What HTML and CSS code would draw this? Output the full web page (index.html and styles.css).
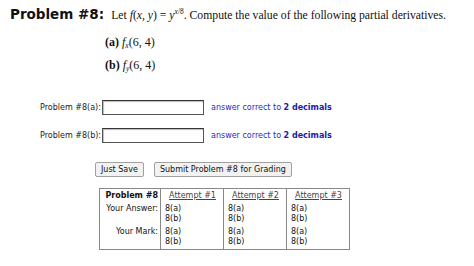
FILE: index.html
```html
<!DOCTYPE html>
<html lang="en">
<head>
    <meta charset="UTF-8">
    <title>Problem 8</title>
    <link rel="stylesheet" href="styles.css">
</head>
<body>

    <!-- Problem text -->
    <div class="problem">
        <span class="problem-title">Problem #8:</span>
        <span class="statement">Let <i>f</i>(<i>x</i>, <i>y</i>) = <i>y</i><sup><i>x</i>/8</sup>. Compute the value of the following partial derivatives.</span>
    </div>

    <div class="parts">
        <div class="part"><b>(a)</b> <i>f<sub>x</sub></i>(6, 4)</div>
        <div class="part"><b>(b)</b> <i>f<sub>y</sub></i>(6, 4)</div>
    </div>

    <!-- Answers -->
    <div class="answers">
        <label for="ansA">Problem #8(a):</label>
        <input type="text" id="ansA">
        <span class="hint">answer correct to <b>2 decimals</b></span>

        <label for="ansB">Problem #8(b):</label>
        <input type="text" id="ansB">
        <span class="hint">answer correct to <b>2 decimals</b></span>
    </div>

    <div class="buttons">
        <button type="button">Just Save</button>
        <button type="button">Submit Problem #8 for Grading</button>
    </div>

    <!-- Attempts -->
    <table class="attempts">
        <colgroup>
            <col class="col-head">
            <col class="col-try">
            <col class="col-try">
            <col class="col-try">
        </colgroup>
        <tr>
            <th class="row-head">Problem #8</th>
            <th><u>Attempt #1</u></th>
            <th><u>Attempt #2</u></th>
            <th><u>Attempt #3</u></th>
        </tr>
        <tr>
            <td class="row-head">Your Answer:</td>
            <td>8(a)<br>8(b)</td>
            <td>8(a)<br>8(b)</td>
            <td>8(a)<br>8(b)</td>
        </tr>
        <tr>
            <td class="row-head">Your Mark:</td>
            <td>8(a)<br>8(b)</td>
            <td>8(a)<br>8(b)</td>
            <td>8(a)<br>8(b)</td>
        </tr>
    </table>

</body>
</html>
```

FILE: styles.css
```css
body {
    margin: 0;
    padding: 0;
    background: #fff;
    color: #111;
    font-family: 'DejaVu Sans', Verdana, sans-serif;
    font-size: 8px;
}

/* Problem text */
.problem {
    padding: 6px 0 0 10px;
    display: flex;
    align-items: baseline;
    gap: 7px;
}
.problem-title {
    font-weight: bold;
    font-size: 13.5px;
}
.statement {
    font-family: 'Liberation Serif', 'Times New Roman', serif;
    font-size: 11.7px;
}
.statement sup {
    font-size: 7.5px;
    vertical-align: 5px;
    line-height: 0;
}

.parts {
    margin: 13px 0 0 105px;
    font-family: 'Liberation Serif', 'Times New Roman', serif;
    font-size: 12px;
}
.part {
    height: 23px;
}
.part sub {
    font-size: 7.5px;
    vertical-align: -2px;
    line-height: 0;
}

/* Answers */
.answers {
    margin: 19px 0 0 40px;
    display: grid;
    grid-template-columns: 58px 102px auto;
    column-gap: 5px;
    row-gap: 13px;
    align-items: center;
}
.answers label {
    color: #222;
    white-space: nowrap;
}
.answers input {
    width: 102px;
    height: 15px;
    box-sizing: border-box;
    margin: 0 0 0 -1px;
    padding: 0;
    border: 1px solid #555;
    border-top-color: #333;
    box-shadow: inset 1px 1px 1px #bbb;
}
.hint {
    color: #2a2ac8;
    padding-left: 1px;
}
.hint b {
    color: #1a1ab0;
}

.buttons {
    margin: 19px 0 0 95px;
    display: flex;
    gap: 10px;
}
.buttons button {
    font-family: 'DejaVu Sans', Verdana, sans-serif;
    font-size: 8px;
    color: #111;
    height: 15px;
    padding: 0 5px;
    background: #f2f2f2;
    border: 1px solid #a0a0a0;
    border-radius: 2px;
}

/* Attempts */
.attempts {
    margin: 11px 0 0 99px;
    border-collapse: collapse;
    border: 1px solid #888;
    table-layout: fixed;
    width: 250px;
}
.col-head {
    width: 61px;
}
.col-try {
    width: 63px;
}
.attempts th,
.attempts td {
    padding: 1px 3px 2px 4px;
    border-left: 1px solid #888;
    text-align: left;
    vertical-align: top;
    line-height: 10px;
    white-space: nowrap;
    overflow: hidden;
}
.attempts th {
    font-weight: normal;
    color: #444;
    padding-top: 2px;
    text-align: center;
}
.attempts th.row-head {
    font-weight: bold;
    color: #111;
}
.attempts .row-head {
    text-align: right;
    padding-right: 2px;
}
```
